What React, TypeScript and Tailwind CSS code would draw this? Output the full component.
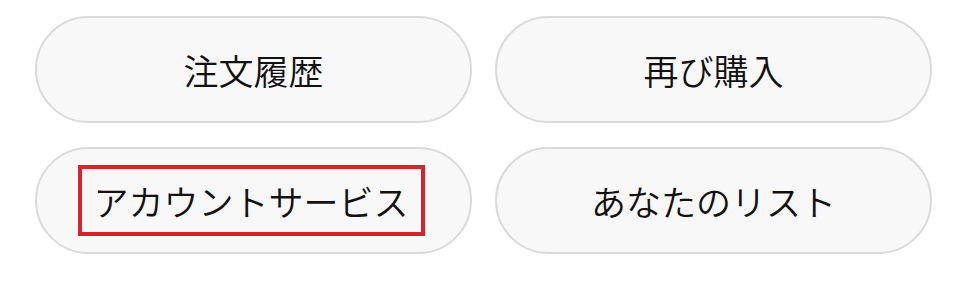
const items = [
  { label: "注文履歴" },
  { label: "再び購入" },
  { label: "アカウントサービス", highlight: true },
  { label: "あなたのリスト" },
];

export default function App() {
  return (
    <div
      className="w-[967px] h-[287px] bg-white px-[35px] pt-[16px]"
      style={{ fontFamily: '"Noto Sans CJK JP", "Noto Sans", sans-serif' }}
    >
      <div className="grid grid-cols-2 gap-x-[23px] gap-y-[24px]">
        {items.map((item) => (
          <button
            key={item.label}
            className="h-[107px] rounded-full border-2 border-[#dadada] bg-[#f8f8f8] flex items-center justify-center text-[35px] font-[350] leading-none text-[#111]"
          >
            {item.highlight ? (
              <span className="w-[347px] h-[71px] -ml-[5px] border-4 border-[#d8232f] flex items-center justify-center">
                {item.label}
              </span>
            ) : (
              item.label
            )}
          </button>
        ))}
      </div>
    </div>
  );
}
